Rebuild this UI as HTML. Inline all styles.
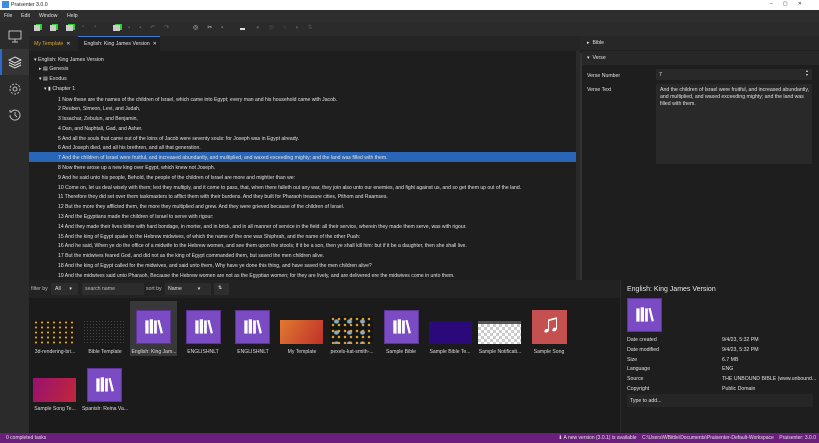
<!DOCTYPE html>
<html><head><style>
*{margin:0;padding:0;box-sizing:border-box}
body{width:819px;height:443px;overflow:hidden;background:#1e1e1e;font-family:"Liberation Sans",sans-serif;color:#ddd;position:relative}
.a{position:absolute}
.t{font-size:5.2px;white-space:nowrap;color:#e0e0e0}
.th{position:absolute}
.lbl{position:absolute;font-size:5.1px;color:#ddd;text-align:center;width:50px;white-space:nowrap;overflow:hidden}
.bk{background:#7b4bc4;border:1px solid #5c3596}
</style></head><body>
<div class="a" style="left:0;top:0;width:819px;height:10px;background:#fff"></div>
<div class="a" style="left:2px;top:1px;width:7px;height:7px;background:#3a8ee6"></div>
<div class="a t" style="left:11px;top:2px;color:#222">Praisenter 3.0.0</div>
<div class="a t" style="left:770px;top:1px;color:#333;letter-spacing:10px">–▢✕</div>
<div class="a" style="left:0;top:10px;width:819px;height:12px;background:#2e2e2e"></div>
<div class="a t" style="left:4px;top:13px">File</div>
<div class="a t" style="left:21px;top:13px">Edit</div>
<div class="a t" style="left:39px;top:13px">Window</div>
<div class="a t" style="left:67px;top:13px">Help</div>
<div class="a" style="left:0;top:22px;width:29px;height:411px;background:#2b2b2b"></div>
<div class="a" style="left:0;top:49px;width:29px;height:26px;background:#353535"></div>
<div class="a" style="left:0;top:49px;width:2px;height:26px;background:#2d6ad0"></div>
<svg class="a" style="left:8px;top:29px" width="14" height="14" viewBox="0 0 14 14" fill="none" stroke="#bbb" stroke-width="1"><rect x="1" y="2" width="12" height="8"/><path d="M7 10v3M4 13h6"/></svg>
<svg class="a" style="left:8px;top:55px" width="14" height="14" viewBox="0 0 14 14" fill="none" stroke="#ddd" stroke-width="1"><path d="M7 2l6 3-6 3-6-3zM1 7.5l6 3 6-3M1 10l6 3 6-3"/></svg>
<svg class="a" style="left:8px;top:82px" width="14" height="14" viewBox="0 0 14 14" fill="none" stroke="#bbb" stroke-width="1"><circle cx="7" cy="7" r="2"/><circle cx="7" cy="7" r="5" stroke-dasharray="2 1.4"/></svg>
<svg class="a" style="left:8px;top:108px" width="14" height="14" viewBox="0 0 14 14" fill="none" stroke="#bbb" stroke-width="1"><path d="M2 7a5 5 0 1 0 1.5-3.5M2 2v2h2M7 4v3l2 2"/></svg>
<div class="a" style="left:29px;top:22px;width:790px;height:14px;background:#2b2b2b"></div>
<div class="a" style="left:34px;top:25px;width:6px;height:6px;background:#ccc;box-shadow:2px -1px 0 #3c3"></div>
<div class="a" style="left:50px;top:25px;width:6px;height:6px;background:#ccc;box-shadow:2px -1px 0 #3c3"></div>
<div class="a" style="left:66px;top:25px;width:7px;height:6px;background:#ccc;box-shadow:2px -1px 0 #3c3"></div>
<div class="a" style="left:113px;top:25px;width:7px;height:6px;background:#ccc;box-shadow:2px -1px 0 #3c3"></div>
<div class="a t" style="left:82px;top:24px;color:#555;letter-spacing:10px;font-size:6px">▪▪</div>
<div class="a t" style="left:128px;top:24px;color:#666;letter-spacing:9px;font-size:6px">▪▪↶↷</div>
<div class="a t" style="left:193px;top:24px;color:#ccc;letter-spacing:9px;font-size:6px">◎✂▫</div>
<div class="a" style="left:240px;top:28px;width:5px;height:1.5px;background:#ddd"></div>
<div class="a t" style="left:256px;top:24px;color:#555;letter-spacing:9px;font-size:6px">●◎○⏸⇅</div>
<div class="a" style="left:29px;top:36px;width:551px;height:15px;background:#252525"></div>
<div class="a t" style="left:34px;top:41px;color:#d7a534">My Template <span style="color:#ddd">&nbsp;✕</span></div>
<div class="a" style="left:78px;top:36px;width:82px;height:15px;background:#1e1e1e;border-top:1px solid #3a7bd5"></div>
<div class="a t" style="left:84px;top:41px">English: King James Version &nbsp;✕</div>
<div class="a t" style="left:34px;top:57px">▾ English: King James Version</div>
<div class="a t" style="left:39px;top:66px">▸ ▤ Genesis</div>
<div class="a t" style="left:39px;top:76px">▾ ▤ Exodus</div>
<div class="a t" style="left:44px;top:86px">▾ ▮ Chapter 1</div>
<div class="a" style="left:29px;top:152px;width:547px;height:10px;background:#2a66b8"></div>
<div class="a" style="left:58px;top:95.5px;line-height:9.8px;font-size:5.1px;white-space:nowrap;color:#e0e0e0">
1 Now these are the names of the children of Israel, which came into Egypt; every man and his household came with Jacob.<br>
2 Reuben, Simeon, Levi, and Judah,<br>
3 Issachar, Zebulun, and Benjamin,<br>
4 Dan, and Naphtali, Gad, and Asher.<br>
5 And all the souls that came out of the loins of Jacob were seventy souls: for Joseph was in Egypt already.<br>
6 And Joseph died, and all his brethren, and all that generation.<br>
7 And the children of Israel were fruitful, and increased abundantly, and multiplied, and waxed exceeding mighty; and the land was filled with them.<br>
8 Now there arose up a new king over Egypt, which knew not Joseph.<br>
9 And he said unto his people, Behold, the people of the children of Israel are more and mightier than we:<br>
10 Come on, let us deal wisely with them; lest they multiply, and it come to pass, that, when there falleth out any war, they join also unto our enemies, and fight against us, and so get them up out of the land.<br>
11 Therefore they did set over them taskmasters to afflict them with their burdens. And they built for Pharaoh treasure cities, Pithom and Raamses.<br>
12 But the more they afflicted them, the more they multiplied and grew. And they were grieved because of the children of Israel.<br>
13 And the Egyptians made the children of Israel to serve with rigour:<br>
14 And they made their lives bitter with hard bondage, in morter, and in brick, and in all manner of service in the field: all their service, wherein they made them serve, was with rigour.<br>
15 And the king of Egypt spake to the Hebrew midwives, of which the name of the one was Shiphrah, and the name of the other Puah:<br>
16 And he said, When ye do the office of a midwife to the Hebrew women, and see them upon the stools; if it be a son, then ye shall kill him: but if it be a daughter, then she shall live.<br>
17 But the midwives feared God, and did not as the king of Egypt commanded them, but saved the men children alive.<br>
18 And the king of Egypt called for the midwives, and said unto them, Why have ye done this thing, and have saved the men children alive?<br>
19 And the midwives said unto Pharaoh, Because the Hebrew women are not as the Egyptian women; for they are lively, and are delivered ere the midwives come in unto them.
</div>
<div class="a" style="left:576px;top:51px;width:4px;height:229px;background:#2a2a2a"></div>
<div class="a" style="left:580px;top:36px;width:239px;height:244px;background:#1e1e1e"></div>
<div class="a" style="left:580px;top:36px;width:239px;height:14px;background:#272727"></div>
<div class="a t" style="left:587px;top:40px">▸ &nbsp;Bible</div>
<div class="a" style="left:582px;top:51px;width:237px;height:14px;background:#272727"></div>
<div class="a t" style="left:587px;top:55px">▾ &nbsp;Verse</div>
<div class="a" style="left:580px;top:53px;width:2px;height:227px;background:#333"></div>
<div class="a t" style="left:587px;top:73px">Verse Number</div>
<div class="a" style="left:656px;top:69px;width:156px;height:11px;background:#292929"></div>
<div class="a t" style="left:659px;top:72px">7</div>
<div class="a t" style="left:806px;top:69px;font-size:4px;line-height:4px">▴<br>▾</div>
<div class="a t" style="left:587px;top:87px">Verse Text</div>
<div class="a" style="left:656px;top:84px;width:156px;height:80px;background:#292929"></div>
<div class="a" style="left:660px;top:87px;width:150px;font-size:5.2px;line-height:7.2px;color:#e0e0e0">And the children of Israel were fruitful, and increased abundantly, and multiplied, and waxed exceeding mighty; and the land was filled with them.</div>
<div class="a" style="left:29px;top:280px;width:591px;height:153px;background:#1b1b1b"></div>
<div class="a" style="left:29px;top:280px;width:591px;height:18px;background:#222"></div>
<div class="a t" style="left:31px;top:286px;color:#bbb">filter by</div>
<div class="a" style="left:51px;top:283px;width:27px;height:12px;background:#2c2c2c"></div>
<div class="a t" style="left:55px;top:286px">All &nbsp;&nbsp;&nbsp;&nbsp;&nbsp;▾</div>
<div class="a" style="left:82px;top:283px;width:62px;height:12px;background:#2c2c2c"></div>
<div class="a t" style="left:85px;top:286px;color:#bbb">search name</div>
<div class="a t" style="left:146px;top:286px;color:#bbb">sort by</div>
<div class="a" style="left:165px;top:283px;width:46px;height:12px;background:#2c2c2c"></div>
<div class="a t" style="left:168px;top:286px">Name &nbsp;&nbsp;&nbsp;&nbsp;&nbsp;&nbsp;&nbsp;&nbsp;&nbsp;&nbsp;▾</div>
<div class="a" style="left:214px;top:283px;width:15px;height:12px;background:#2e2e2e"></div>
<div class="a t" style="left:218px;top:285px">⇅</div>
<div class="a" style="left:130px;top:301px;width:47px;height:55px;background:#383838"></div>
<div class="th" style="left:33px;top:320px;width:43px;height:24px;background:#1e1812;background-image:radial-gradient(#d8a53a 1px,transparent 1.3px);background-size:6px 5px"></div>
<div class="th" style="left:83px;top:320px;width:43px;height:24px;background:#1a1a1a;background-image:radial-gradient(#444 .5px,transparent .7px);background-size:3px 3px"></div>
<div class="th bk" style="left:136px;top:310px;width:35px;height:34px"></div>
<div class="th bk" style="left:186px;top:310px;width:35px;height:34px"></div>
<div class="th bk" style="left:235px;top:310px;width:35px;height:34px"></div>
<div class="th" style="left:280px;top:320px;width:43px;height:24px;background:linear-gradient(120deg,#e07a30,#c0302a)"></div>
<div class="th" style="left:330px;top:316px;width:43px;height:28px;background:#151515;background-image:radial-gradient(#e0a030 1px,transparent 1.5px),radial-gradient(#8ab 2px,transparent 3px);background-size:6px 6px,13px 11px"></div>
<div class="th bk" style="left:384px;top:310px;width:35px;height:34px"></div>
<div class="th" style="left:429px;top:321px;width:43px;height:23px;background:#2a0a7a"></div>
<div class="th" style="left:478px;top:321px;width:43px;height:23px;background:#eee;background-image:conic-gradient(#ccc 25%,#fff 0 50%,#ccc 0 75%,#fff 0);background-size:6px 6px;border-top:3px solid #555"></div>
<div class="th" style="left:532px;top:310px;width:35px;height:34px;background:#c55050"></div>
<div class="th t" style="left:541px;top:308px;font-size:26px;color:#fff">♫</div>
<div class="th" style="left:33px;top:378px;width:43px;height:24px;background:linear-gradient(110deg,#9a1070,#c02838)"></div>
<div class="th bk" style="left:87px;top:368px;width:35px;height:34px"></div>
<svg width="0" height="0" style="position:absolute"><defs><symbol id="bs" viewBox="0 0 20 20"><g fill="#fff"><rect x="3" y="4" width="3" height="12"/><rect x="7" y="3" width="3" height="13"/><rect x="11" y="4" width="2.5" height="12"/><path d="M14 4l2-.5 3 12-2 .5z"/></g></symbol></defs></svg>
<svg class="a" style="left:142px;top:316px" width="22" height="22"><use href="#bs"/></svg>
<svg class="a" style="left:192px;top:316px" width="22" height="22"><use href="#bs"/></svg>
<svg class="a" style="left:241px;top:316px" width="22" height="22"><use href="#bs"/></svg>
<svg class="a" style="left:390px;top:316px" width="22" height="22"><use href="#bs"/></svg>
<svg class="a" style="left:93px;top:374px" width="22" height="22"><use href="#bs"/></svg>
<div class="lbl" style="left:30px;top:349px">3d-rendering-bri...</div>
<div class="lbl" style="left:80px;top:349px">Bible Template</div>
<div class="lbl" style="left:129px;top:349px">English: King Jam...</div>
<div class="lbl" style="left:178px;top:349px">ENGLISHNLT</div>
<div class="lbl" style="left:228px;top:349px">ENGLISHNLT</div>
<div class="lbl" style="left:277px;top:349px">My Template</div>
<div class="lbl" style="left:327px;top:349px">pexels-kat-smith-...</div>
<div class="lbl" style="left:376px;top:349px">Sample Bible</div>
<div class="lbl" style="left:425px;top:349px">Sample Bible Te...</div>
<div class="lbl" style="left:475px;top:349px">Sample Notificati...</div>
<div class="lbl" style="left:524px;top:349px">Sample Song</div>
<div class="lbl" style="left:30px;top:406px">Sample Song Te...</div>
<div class="lbl" style="left:80px;top:406px">Spanish: Reina Va...</div>
<div class="a" style="left:620px;top:280px;width:199px;height:153px;background:#1e1e1e;border-left:1px solid #2a2a2a"></div>
<div class="a" style="left:627px;top:286px;font-size:7px;color:#e8e8e8;white-space:nowrap">English: King James Version</div>
<div class="a bk" style="left:627px;top:298px;width:35px;height:34px"></div>
<svg class="a" style="left:633px;top:304px" width="22" height="22"><use href="#bs"/></svg>
<div class="a t" style="left:627px;top:336px;line-height:9.8px">Date created<br>Date modified<br>Size<br>Language<br>Source<br>Copyright</div>
<div class="a t" style="left:722px;top:336px;line-height:9.8px">9/4/23, 5:32 PM<br>9/4/23, 5:32 PM<br>6.7 MB<br>ENG<br>THE UNBOUND BIBLE (www.unbound...<br>Public Domain</div>
<div class="a" style="left:627px;top:394px;width:186px;height:13px;background:#262626"></div>
<div class="a t" style="left:630px;top:398px">Type to add...</div>
<div class="a" style="left:0;top:433px;width:819px;height:10px;background:#6b1f7c"></div>
<div class="a t" style="left:6px;top:435px;font-size:5px">0 completed tasks</div>
<div class="a t" style="right:3px;top:435px;font-size:5px;text-align:right">⬇ A new version (3.0.1) is available &nbsp;&nbsp;&nbsp;C:\Users\WBittle\Documents\Praisenter-Default-Workspace &nbsp;&nbsp;&nbsp;Praisenter: 3.0.0</div>
</body></html>
